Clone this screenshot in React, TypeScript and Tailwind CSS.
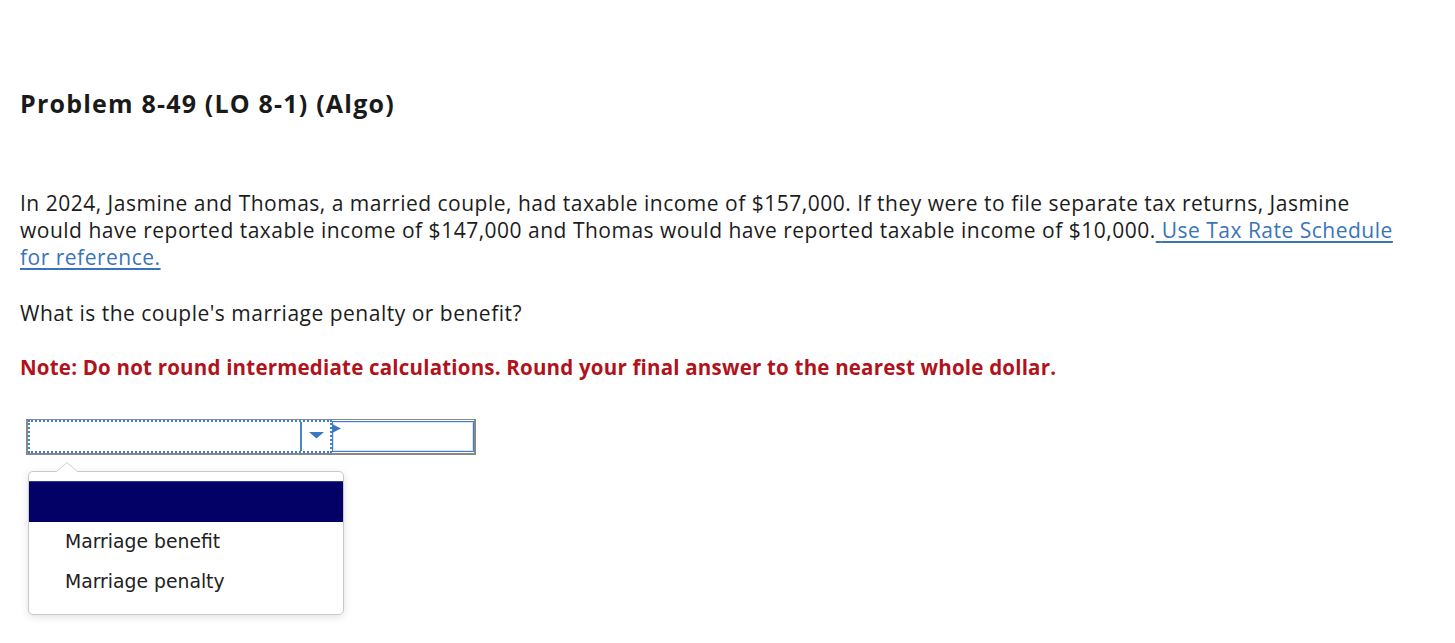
import React from "react";

export default function App() {
  return (
    <div className="min-h-[643px] w-[1455px] bg-white text-[#1c1c1c]" style={{ fontFamily: "'Open Sans', 'Noto Sans', sans-serif" }}>
      <div className="px-5 pt-[86px]">
        <h1 className="text-[25px] font-bold leading-[34px] tracking-[1.2px] text-[#1a1a1a]">Problem 8-49 (LO 8-1) (Algo)</h1>
        <div className="mt-[70px] text-[21px] leading-[27px] tracking-[0.5px]">
          <p className="whitespace-nowrap">
            In 2024, Jasmine and Thomas, a married couple, had taxable income of $157,000. If they were to file separate tax returns, Jasmine
            <br />
            would have reported taxable income of $147,000 and Thomas would have reported taxable income of $10,000.
            <a className="text-[#3a74b8] underline underline-offset-[3px]" href="#">
              {" "}Use Tax Rate Schedule
              <br />
              for reference.
            </a>
          </p>
          <p className="mt-[29px]">What is the couple's marriage penalty or benefit?</p>
          <p className="mt-[27px] text-[20.5px] font-bold tracking-[0.2px] text-[#b0131b]">
            Note: Do not round intermediate calculations. Round your final answer to the nearest whole dollar.
          </p>
        </div>
      </div>

      <div className="ml-[26px] mt-[38px] flex w-[450px] border-t border-l-2 border-r-2 border-b-2 border-[#888888] bg-white">
        <div className="relative h-[33px] w-[304px] border-2 border-dotted border-[#3a7fd0]">
          <div className="absolute right-[28px] top-0 h-[29px] w-[2px] bg-[#4a84c6]" />
          <svg className="absolute right-[6px] top-[10px]" width="15" height="7" viewBox="0 0 15 7">
            <polygon points="0,0 15,0 7.5,6.5" fill="#3b78c4" />
          </svg>
        </div>
        <div className="relative my-[1px] h-[31px] w-[142px] border border-[#3f80cc] bg-white shadow-[inset_0_0_0_1px_#d6e4f5]">
          <svg className="absolute -left-[1px] top-[2px]" width="9" height="9" viewBox="0 0 9 9">
            <polygon points="0,0 9,4.5 0,9" fill="#3b78c4" />
          </svg>
        </div>
      </div>

      <div className="relative ml-[28px] mt-[16px] w-[316px] rounded-[5px] border border-[#c9c9c9] bg-white pt-[9px] pb-[12px] shadow-[0_2px_8px_rgba(0,0,0,0.12)]" style={{ fontFamily: "'DejaVu Sans', Verdana, sans-serif" }}>
        <svg className="absolute left-[26px] top-[-10px]" width="24" height="11" viewBox="0 0 24 11">
          <polygon points="0,11 12,0.5 24,11" fill="#ffffff" stroke="#d0d0d0" strokeWidth="1" />
          <rect x="0" y="10" width="24" height="2" fill="#ffffff" />
        </svg>
        <div className="h-[41px] border-t border-[#3a3a8a] bg-[#030066]" />
        <div className="flex h-[40px] items-center pl-[36px] text-[18.8px] text-[#222222]">Marriage benefit</div>
        <div className="flex h-[40px] items-center pl-[36px] text-[18.8px] text-[#222222]">Marriage penalty</div>
      </div>
    </div>
  );
}
